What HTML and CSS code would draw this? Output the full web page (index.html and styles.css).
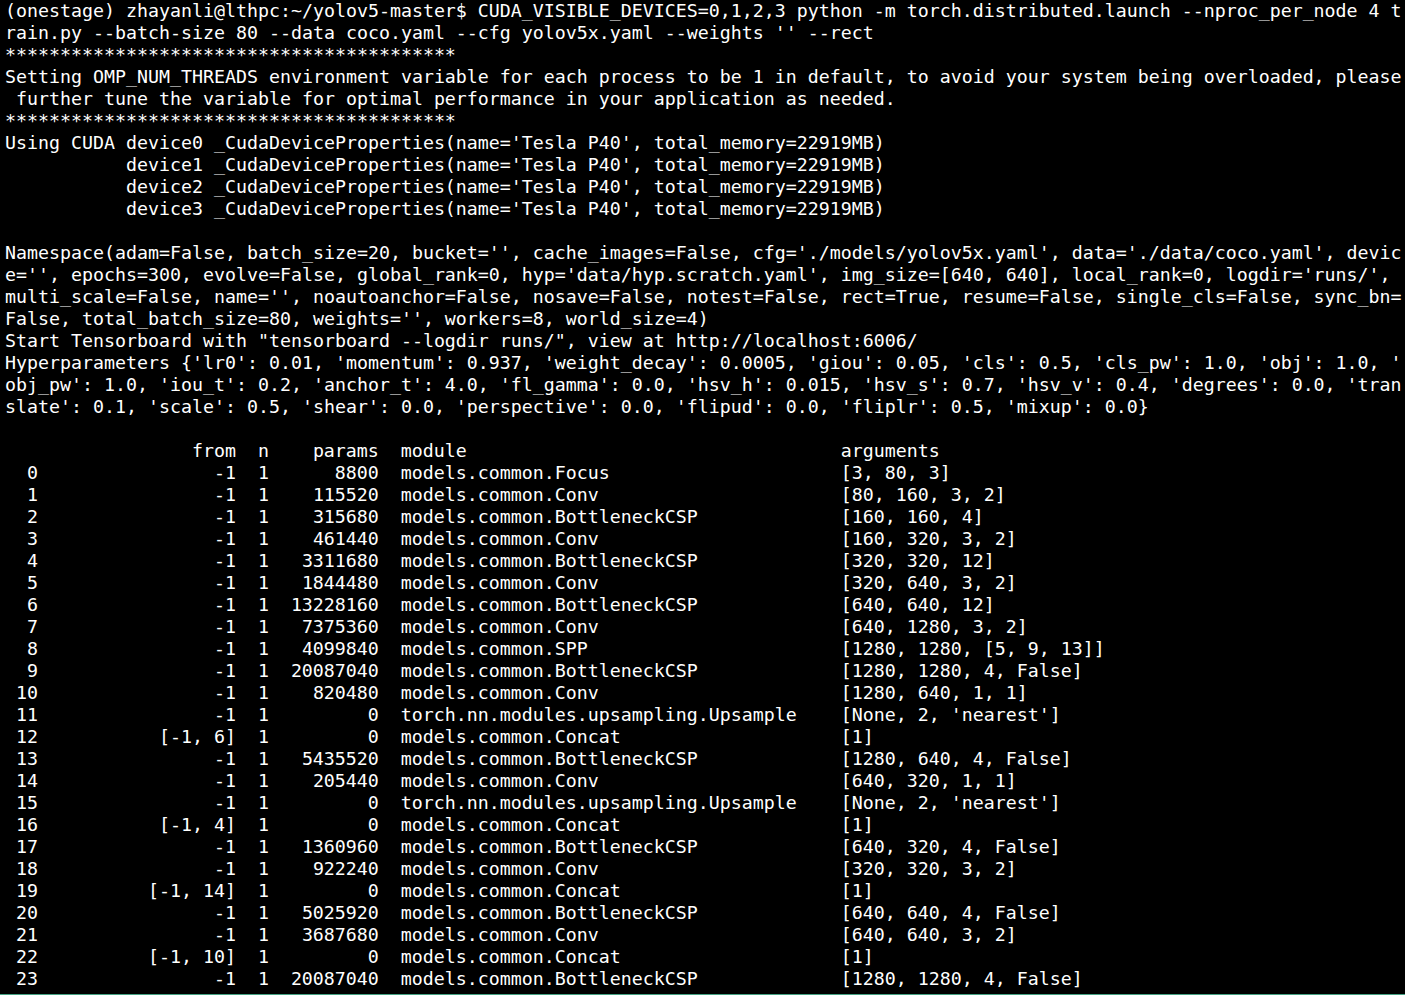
FILE: index.html
```html
<!DOCTYPE html>
<html>
<head>
<meta charset="utf-8">
<link rel="stylesheet" href="styles.css">
</head>
<body>
<div class="term">
<pre class="out">(onestage) zhayanli@lthpc:~/yolov5-master$ CUDA_VISIBLE_DEVICES=0,1,2,3 python -m torch.distributed.launch --nproc_per_node 4 t
rain.py --batch-size 80 --data coco.yaml --cfg yolov5x.yaml --weights '' --rect
*****************************************
Setting OMP_NUM_THREADS environment variable for each process to be 1 in default, to avoid your system being overloaded, please
 further tune the variable for optimal performance in your application as needed.
*****************************************
Using CUDA device0 _CudaDeviceProperties(name='Tesla P40', total_memory=22919MB)
           device1 _CudaDeviceProperties(name='Tesla P40', total_memory=22919MB)
           device2 _CudaDeviceProperties(name='Tesla P40', total_memory=22919MB)
           device3 _CudaDeviceProperties(name='Tesla P40', total_memory=22919MB)

Namespace(adam=False, batch_size=20, bucket='', cache_images=False, cfg='./models/yolov5x.yaml', data='./data/coco.yaml', devic
e='', epochs=300, evolve=False, global_rank=0, hyp='data/hyp.scratch.yaml', img_size=[640, 640], local_rank=0, logdir='runs/', 
multi_scale=False, name='', noautoanchor=False, nosave=False, notest=False, rect=True, resume=False, single_cls=False, sync_bn=
False, total_batch_size=80, weights='', workers=8, world_size=4)
Start Tensorboard with "tensorboard --logdir runs/", view at http://localhost:6006/
Hyperparameters {'lr0': 0.01, 'momentum': 0.937, 'weight_decay': 0.0005, 'giou': 0.05, 'cls': 0.5, 'cls_pw': 1.0, 'obj': 1.0, '
obj_pw': 1.0, 'iou_t': 0.2, 'anchor_t': 4.0, 'fl_gamma': 0.0, 'hsv_h': 0.015, 'hsv_s': 0.7, 'hsv_v': 0.4, 'degrees': 0.0, 'tran
slate': 0.1, 'scale': 0.5, 'shear': 0.0, 'perspective': 0.0, 'flipud': 0.0, 'fliplr': 0.5, 'mixup': 0.0}
</pre>
<div class="blank"></div>
<div class="table">
<div class="row"><span class="c-i"></span><span class="c-f">from</span><span class="c-n">n</span><span class="c-p">params</span><span class="c-m">module</span><span class="c-a">arguments</span></div>
<div class="row"><span class="c-i">0</span><span class="c-f">-1</span><span class="c-n">1</span><span class="c-p">8800</span><span class="c-m">models.common.Focus</span><span class="c-a">[3, 80, 3]</span></div>
<div class="row"><span class="c-i">1</span><span class="c-f">-1</span><span class="c-n">1</span><span class="c-p">115520</span><span class="c-m">models.common.Conv</span><span class="c-a">[80, 160, 3, 2]</span></div>
<div class="row"><span class="c-i">2</span><span class="c-f">-1</span><span class="c-n">1</span><span class="c-p">315680</span><span class="c-m">models.common.BottleneckCSP</span><span class="c-a">[160, 160, 4]</span></div>
<div class="row"><span class="c-i">3</span><span class="c-f">-1</span><span class="c-n">1</span><span class="c-p">461440</span><span class="c-m">models.common.Conv</span><span class="c-a">[160, 320, 3, 2]</span></div>
<div class="row"><span class="c-i">4</span><span class="c-f">-1</span><span class="c-n">1</span><span class="c-p">3311680</span><span class="c-m">models.common.BottleneckCSP</span><span class="c-a">[320, 320, 12]</span></div>
<div class="row"><span class="c-i">5</span><span class="c-f">-1</span><span class="c-n">1</span><span class="c-p">1844480</span><span class="c-m">models.common.Conv</span><span class="c-a">[320, 640, 3, 2]</span></div>
<div class="row"><span class="c-i">6</span><span class="c-f">-1</span><span class="c-n">1</span><span class="c-p">13228160</span><span class="c-m">models.common.BottleneckCSP</span><span class="c-a">[640, 640, 12]</span></div>
<div class="row"><span class="c-i">7</span><span class="c-f">-1</span><span class="c-n">1</span><span class="c-p">7375360</span><span class="c-m">models.common.Conv</span><span class="c-a">[640, 1280, 3, 2]</span></div>
<div class="row"><span class="c-i">8</span><span class="c-f">-1</span><span class="c-n">1</span><span class="c-p">4099840</span><span class="c-m">models.common.SPP</span><span class="c-a">[1280, 1280, [5, 9, 13]]</span></div>
<div class="row"><span class="c-i">9</span><span class="c-f">-1</span><span class="c-n">1</span><span class="c-p">20087040</span><span class="c-m">models.common.BottleneckCSP</span><span class="c-a">[1280, 1280, 4, False]</span></div>
<div class="row"><span class="c-i">10</span><span class="c-f">-1</span><span class="c-n">1</span><span class="c-p">820480</span><span class="c-m">models.common.Conv</span><span class="c-a">[1280, 640, 1, 1]</span></div>
<div class="row"><span class="c-i">11</span><span class="c-f">-1</span><span class="c-n">1</span><span class="c-p">0</span><span class="c-m">torch.nn.modules.upsampling.Upsample</span><span class="c-a">[None, 2, 'nearest']</span></div>
<div class="row"><span class="c-i">12</span><span class="c-f">[-1, 6]</span><span class="c-n">1</span><span class="c-p">0</span><span class="c-m">models.common.Concat</span><span class="c-a">[1]</span></div>
<div class="row"><span class="c-i">13</span><span class="c-f">-1</span><span class="c-n">1</span><span class="c-p">5435520</span><span class="c-m">models.common.BottleneckCSP</span><span class="c-a">[1280, 640, 4, False]</span></div>
<div class="row"><span class="c-i">14</span><span class="c-f">-1</span><span class="c-n">1</span><span class="c-p">205440</span><span class="c-m">models.common.Conv</span><span class="c-a">[640, 320, 1, 1]</span></div>
<div class="row"><span class="c-i">15</span><span class="c-f">-1</span><span class="c-n">1</span><span class="c-p">0</span><span class="c-m">torch.nn.modules.upsampling.Upsample</span><span class="c-a">[None, 2, 'nearest']</span></div>
<div class="row"><span class="c-i">16</span><span class="c-f">[-1, 4]</span><span class="c-n">1</span><span class="c-p">0</span><span class="c-m">models.common.Concat</span><span class="c-a">[1]</span></div>
<div class="row"><span class="c-i">17</span><span class="c-f">-1</span><span class="c-n">1</span><span class="c-p">1360960</span><span class="c-m">models.common.BottleneckCSP</span><span class="c-a">[640, 320, 4, False]</span></div>
<div class="row"><span class="c-i">18</span><span class="c-f">-1</span><span class="c-n">1</span><span class="c-p">922240</span><span class="c-m">models.common.Conv</span><span class="c-a">[320, 320, 3, 2]</span></div>
<div class="row"><span class="c-i">19</span><span class="c-f">[-1, 14]</span><span class="c-n">1</span><span class="c-p">0</span><span class="c-m">models.common.Concat</span><span class="c-a">[1]</span></div>
<div class="row"><span class="c-i">20</span><span class="c-f">-1</span><span class="c-n">1</span><span class="c-p">5025920</span><span class="c-m">models.common.BottleneckCSP</span><span class="c-a">[640, 640, 4, False]</span></div>
<div class="row"><span class="c-i">21</span><span class="c-f">-1</span><span class="c-n">1</span><span class="c-p">3687680</span><span class="c-m">models.common.Conv</span><span class="c-a">[640, 640, 3, 2]</span></div>
<div class="row"><span class="c-i">22</span><span class="c-f">[-1, 10]</span><span class="c-n">1</span><span class="c-p">0</span><span class="c-m">models.common.Concat</span><span class="c-a">[1]</span></div>
<div class="row"><span class="c-i">23</span><span class="c-f">-1</span><span class="c-n">1</span><span class="c-p">20087040</span><span class="c-m">models.common.BottleneckCSP</span><span class="c-a">[1280, 1280, 4, False]</span></div>
</div>
</div>
</body>
</html>
```

FILE: styles.css
```css
html, body {
  margin: 0;
  padding: 0;
  background: #ffffff;
}
.term {
  background: #000000;
  color: #ffffff;
  font-family: "DejaVu Sans Mono", monospace;
  font-size: 18.27px;
  line-height: 22px;
  height: 995px;
  box-sizing: border-box;
  padding-left: 5px;
  border-bottom: 1px solid #45a283;
  overflow: hidden;
}
.out {
  margin: 0;
  font: inherit;
  line-height: 22px;
  white-space: pre;
}
.blank {
  height: 22px;
}
.row {
  display: grid;
  grid-template-columns: 3ch 18ch 3ch 10ch 42ch auto;
  height: 22px;
  white-space: pre;
}
.c-i, .c-f, .c-n, .c-p {
  text-align: right;
}
.c-m {
  padding-left: 2ch;
}
```
